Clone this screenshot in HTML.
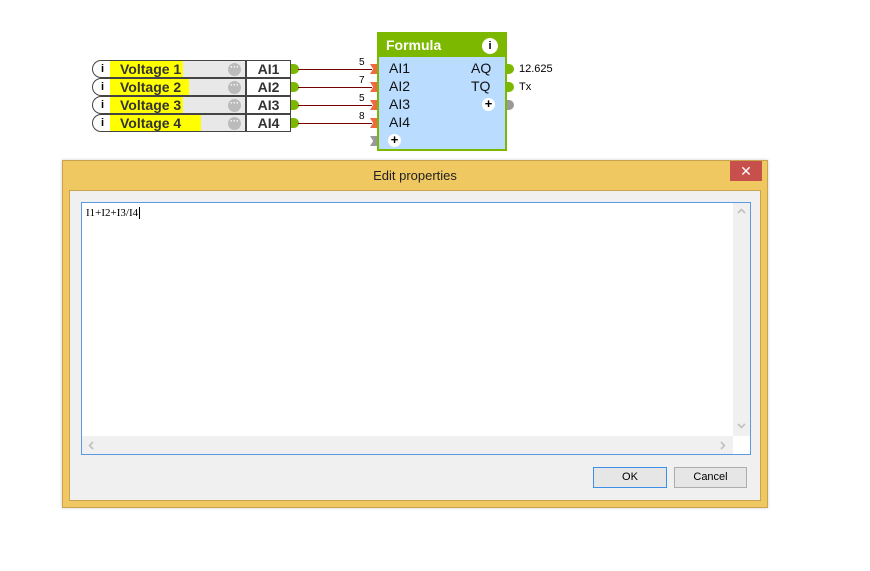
<!DOCTYPE html>
<html><head><style>
*{margin:0;padding:0;box-sizing:border-box}
body{width:870px;height:571px;background:#fff;position:relative;overflow:hidden;font-family:"Liberation Sans",sans-serif}
.a{position:absolute}
.row{position:absolute;left:92px;width:198px;height:18px}
.pill{position:absolute;left:0;top:0;width:20px;height:18px;border:1px solid #444;border-right:none;border-radius:9px 0 0 9px;background:#fff;font-size:11px;font-weight:bold;text-align:center;line-height:16px}
.lab{position:absolute;left:18px;top:0;width:136px;height:18px;background:#e8e8e8;border:1px solid #444;border-left:none}
.yel{position:absolute;left:0;top:0;height:16px;background:#ffff00}
.lt{position:absolute;left:10px;top:0;font-size:14px;font-weight:bold;color:#333;line-height:16px}
.dots{position:absolute;left:118px;top:2px;width:13px;height:13px;border-radius:50%;background:#bbb;color:#fff;font-size:9px;line-height:9px;text-align:center;font-weight:bold}
.ai{position:absolute;left:154px;top:0;width:45px;height:18px;border:1px solid #444;background:#fff;font-size:14px;font-weight:bold;color:#333;text-align:center;line-height:16px}
.gc{position:absolute;left:199px;top:4px;width:8px;height:10px;background:#7cb800;border-radius:0 5px 5px 0}
.wire{position:absolute;height:1px;background:#700}
.num{position:absolute;font-size:10px;color:#000}
.inp{position:absolute;left:370px;width:9px;height:10px;background:#f06a40;clip-path:polygon(0 0,100% 0,100% 100%,0 100%,35% 50%)}
.fl{position:absolute;left:12px;font-size:14px;color:#111}
.plus{position:absolute;width:13px;height:13px;border-radius:50%;background:#fff;color:#000;font-size:13px;line-height:12px;text-align:center;font-weight:bold}
</style></head><body>

<div class="row" style="top:60px"><div class="pill">i</div><div class="lab"><div class="yel" style="width:73px"></div><div class="lt">Voltage 1</div><div class="dots">···</div></div><div class="ai">AI1</div><div class="gc"></div></div>
<div class="row" style="top:78px"><div class="pill">i</div><div class="lab"><div class="yel" style="width:79px"></div><div class="lt">Voltage 2</div><div class="dots">···</div></div><div class="ai">AI2</div><div class="gc"></div></div>
<div class="row" style="top:96px"><div class="pill">i</div><div class="lab"><div class="yel" style="width:73px"></div><div class="lt">Voltage 3</div><div class="dots">···</div></div><div class="ai">AI3</div><div class="gc"></div></div>
<div class="row" style="top:114px"><div class="pill">i</div><div class="lab"><div class="yel" style="width:91px"></div><div class="lt">Voltage 4</div><div class="dots">···</div></div><div class="ai">AI4</div><div class="gc"></div></div>

<div class="wire" style="left:298px;top:69px;width:74px"></div>
<div class="wire" style="left:298px;top:87px;width:74px"></div>
<div class="wire" style="left:298px;top:105px;width:74px"></div>
<div class="wire" style="left:298px;top:123px;width:74px"></div>
<div class="num" style="left:359px;top:57px">5</div>
<div class="num" style="left:359px;top:75px">7</div>
<div class="num" style="left:359px;top:93px">5</div>
<div class="num" style="left:359px;top:111px">8</div>
<div class="inp" style="top:64px"></div>
<div class="inp" style="top:82px"></div>
<div class="inp" style="top:100px"></div>
<div class="inp" style="top:118px"></div>
<div class="inp" style="top:136px;background:#999"></div>

<div class="a" style="left:377px;top:32px;width:130px;height:119px;background:#7cb800;">
 <div class="a" style="left:2px;top:25px;width:126px;height:92px;background:#b9dcff"></div>
 <div class="a" style="left:9px;top:5px;font-size:14px;font-weight:bold;color:#fff">Formula</div>
 <div class="a" style="left:105px;top:6px;width:16px;height:16px;border-radius:50%;background:#fff;font-size:11px;font-weight:bold;text-align:center;line-height:16px">i</div>
 <div class="fl" style="top:28px">AI1</div>
 <div class="fl" style="top:46px">AI2</div>
 <div class="fl" style="top:64px">AI3</div>
 <div class="fl" style="top:82px">AI4</div>
 <div class="a" style="left:94px;top:28px;font-size:14px;color:#111">AQ</div>
 <div class="a" style="left:94px;top:46px;font-size:14px;color:#111">TQ</div>
 <div class="plus" style="left:105px;top:66px">+</div>
 <div class="plus" style="left:11px;top:102px">+</div>
</div>
<div class="a" style="left:507px;top:64px;width:7px;height:10px;background:#7cb800;border-radius:0 5px 5px 0"></div>
<div class="a" style="left:507px;top:82px;width:7px;height:10px;background:#7cb800;border-radius:0 5px 5px 0"></div>
<div class="a" style="left:507px;top:100px;width:7px;height:10px;background:#999;border-radius:0 5px 5px 0"></div>
<div class="a" style="left:519px;top:63px;font-size:11px">12.625</div>
<div class="a" style="left:519px;top:81px;font-size:11px">Tx</div>

<div class="a" style="left:62px;top:160px;width:706px;height:348px;background:#f0c862;border:1px solid #c8a450;box-shadow:0 0 3px rgba(0,0,0,0.2)">
 <div class="a" style="left:0;top:7px;width:704px;text-align:center;font-size:13px;color:#222">Edit properties</div>
 <div class="a" style="left:667px;top:0;width:32px;height:20px;background:#c8504c;color:#fff;font-size:14px;text-align:center;line-height:20px">✕</div>
 <div class="a" style="left:6px;top:29px;width:692px;height:311px;background:#f0f0f0;border:1px solid #c8a450">
  <div class="a" style="left:11px;top:11px;width:670px;height:253px;background:#fff;border:1px solid #5a9ae0">
   <div class="a" style="left:4px;top:4px;font-family:'Liberation Serif',serif;font-size:11px;color:#000">I1+I2+I3/I4<span style="border-left:1px solid #000;margin-left:1px"></span></div>
   <div class="a" style="left:651px;top:0;width:17px;height:233px;background:#f0f0f0">
     <svg class="a" style="left:4px;top:5px" width="9" height="6"><path d="M1 5 L4.5 1.5 L8 5" stroke="#c0c0c0" stroke-width="1.6" fill="none"/></svg>
     <svg class="a" style="left:4px;top:220px" width="9" height="6"><path d="M1 1 L4.5 4.5 L8 1" stroke="#c0c0c0" stroke-width="1.6" fill="none"/></svg>
   </div>
   <div class="a" style="left:0;top:233px;width:651px;height:18px;background:#f0f0f0">
     <svg class="a" style="left:6px;top:5px" width="6" height="9"><path d="M5 1 L1.5 4.5 L5 8" stroke="#c0c0c0" stroke-width="1.6" fill="none"/></svg>
     <svg class="a" style="left:638px;top:5px" width="6" height="9"><path d="M1 1 L4.5 4.5 L1 8" stroke="#c0c0c0" stroke-width="1.6" fill="none"/></svg>
   </div>
  </div>
  <div class="a" style="left:523px;top:276px;width:74px;height:21px;background:#e6e6e6;border:1px solid #3c90e8;font-size:11px;text-align:center;line-height:19px">OK</div>
  <div class="a" style="left:604px;top:276px;width:73px;height:21px;background:#e6e6e6;border:1px solid #adadad;font-size:11px;text-align:center;line-height:19px">Cancel</div>
 </div>
</div>
</body></html>
